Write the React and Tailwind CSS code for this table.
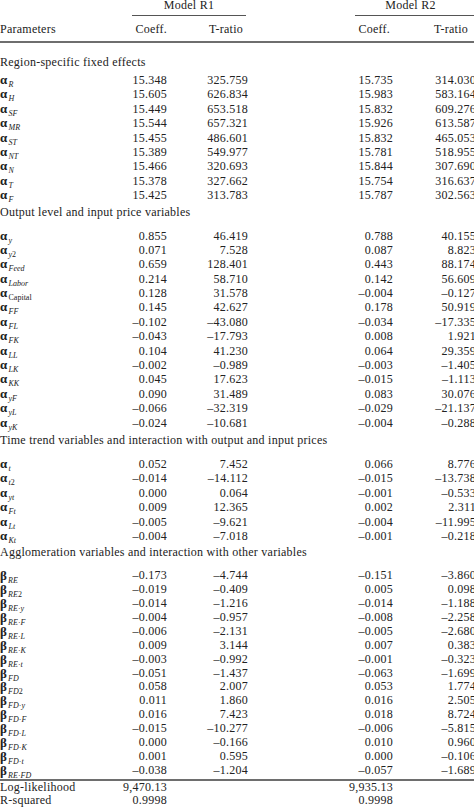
const COLS = 'grid grid-cols-[120px_47px_81px_97px_48px_83px]'

const sections = [
  {
    title: 'Region-specific fixed effects',
    g: 'α',
    head: 'mt-[12px] mb-[4px] h-[14px] leading-[14px]',
    row: 'h-[14.4px] leading-[14.4px]',
    rows: [
      ['R', '15.348', '325.759', '15.735', '314.030'],
      ['H', '15.605', '626.834', '15.983', '583.164'],
      ['SF', '15.449', '653.518', '15.832', '609.276'],
      ['MR', '15.544', '657.321', '15.926', '613.587'],
      ['ST', '15.455', '486.601', '15.832', '465.053'],
      ['NT', '15.389', '549.977', '15.781', '518.955'],
      ['N', '15.466', '320.693', '15.844', '307.690'],
      ['T', '15.378', '327.662', '15.754', '316.637'],
      ['F', '15.425', '313.783', '15.787', '302.563'],
    ],
  },
  {
    title: 'Output level and input price variables',
    g: 'α',
    head: 'mt-[2px] mb-[10px] h-[14px] leading-[14px]',
    row: 'h-[14.4px] leading-[14.4px]',
    rows: [
      ['y', '0.855', '46.419', '0.788', '40.155'],
      ['y2', '0.071', '7.528', '0.087', '8.823'],
      ['Feed', '0.659', '128.401', '0.443', '88.174'],
      ['Labor', '0.214', '58.710', '0.142', '56.609'],
      ['Capital', '0.128', '31.578', '–0.004', '–0.127'],
      ['FF', '0.145', '42.627', '0.178', '50.919'],
      ['FL', '–0.102', '–43.080', '–0.034', '–17.335'],
      ['FK', '–0.043', '–17.793', '0.008', '1.921'],
      ['LL', '0.104', '41.230', '0.064', '29.359'],
      ['LK', '–0.002', '–0.989', '–0.003', '–1.405'],
      ['KK', '0.045', '17.623', '–0.015', '–1.113'],
      ['yF', '0.090', '31.489', '0.083', '30.076'],
      ['yL', '–0.066', '–32.319', '–0.029', '–21.137'],
      ['yK', '–0.024', '–10.681', '–0.004', '–0.288'],
    ],
  },
  {
    title: 'Time trend variables and interaction with output and input prices',
    g: 'α',
    head: 'mt-[3px] mb-[10px] h-[14px] leading-[14px]',
    row: 'h-[14.4px] leading-[14.4px]',
    rows: [
      ['t', '0.052', '7.452', '0.066', '8.776'],
      ['t2', '–0.014', '–14.112', '–0.015', '–13.738'],
      ['yt', '0.000', '0.064', '–0.001', '–0.533'],
      ['Ft', '0.009', '12.365', '0.002', '2.311'],
      ['Lt', '–0.005', '–9.621', '–0.004', '–11.995'],
      ['Kt', '–0.004', '–7.018', '–0.001', '–0.218'],
    ],
  },
  {
    title: 'Agglomeration variables and interaction with other variables',
    g: 'β',
    head: 'mt-[2px] mb-[10px] h-[14px] leading-[14px]',
    row: 'h-[13.9px] leading-[13.9px]',
    rows: [
      ['RE', '–0.173', '–4.744', '–0.151', '–3.860'],
      ['RE2', '–0.019', '–0.409', '0.005', '0.098'],
      ['RE·y', '–0.014', '–1.216', '–0.014', '–1.188'],
      ['RE·F', '–0.004', '–0.957', '–0.008', '–2.258'],
      ['RE·L', '–0.006', '–2.131', '–0.005', '–2.680'],
      ['RE·K', '0.009', '3.144', '0.007', '0.383'],
      ['RE·t', '–0.003', '–0.992', '–0.001', '–0.323'],
      ['FD', '–0.051', '–1.437', '–0.063', '–1.699'],
      ['FD2', '0.058', '2.007', '0.053', '1.774'],
      ['FD·y', '0.011', '1.860', '0.016', '2.505'],
      ['FD·F', '0.016', '7.423', '0.018', '8.724'],
      ['FD·L', '–0.015', '–10.277', '–0.006', '–5.815'],
      ['FD·K', '0.000', '–0.166', '0.010', '0.960'],
      ['FD·t', '0.001', '0.595', '0.000', '–0.106'],
      ['RE·FD', '–0.038', '–1.204', '–0.057', '–1.689'],
    ],
  },
]

function Sub({ text }) {
  // digits and "Capital" are set upright, the rest in italics
  if (text === 'Capital') return <span className="not-italic">{text}</span>
  return text.split('').map((ch, i) =>
    /[0-9·]/.test(ch) ? (
      <span key={i} className="not-italic">{ch}</span>
    ) : (
      <span key={i}>{ch}</span>
    )
  )
}

function Sym({ g, sub }) {
  return (
    <span className="whitespace-nowrap">
      <span className="font-bold text-[13px]">{g}</span>
      <span className="italic text-[8px] leading-none align-[-3px] ml-[1px] tracking-normal">
        <Sub text={sub} />
      </span>
    </span>
  )
}

function Row({ g, r, h }) {
  return (
    <div className={`${COLS} ${h}`}>
      <div>
        <Sym g={g} sub={r[0]} />
      </div>
      <div className="text-right">{r[1]}</div>
      <div className="text-right">{r[2]}</div>
      <div />
      <div className="text-right">{r[3]}</div>
      <div className="text-right">{r[4]}</div>
    </div>
  )
}

export default function App() {
  return (
    <div className="w-[474px] h-[808px] overflow-hidden bg-white text-[#222] font-['Liberation_Serif',serif] text-[12px] tracking-[0.25px]">
      <div className="w-[478px]">
        {/* column group header */}
        <div className={COLS}>
          <div />
          <div className="col-span-2 pl-[12px] pr-[2px]">
            <div className="h-[10px] leading-[10px] text-center">Model R1</div>
            <div className="mt-[5px] h-px bg-[#555]" />
          </div>
          <div />
          <div className="col-span-2 pl-[10px]">
            <div className="h-[10px] leading-[10px] text-center pr-[10px]">Model R2</div>
            <div className="mt-[5px] h-px bg-[#555]" />
          </div>
        </div>

        <div className={`${COLS} mt-[6px] h-[14px] leading-[14px]`}>
          <div>Parameters</div>
          <div className="text-right">Coeff.</div>
          <div className="text-right pr-[5px]">T-ratio</div>
          <div />
          <div className="text-right pr-[3px]">Coeff.</div>
          <div className="text-right pr-[8px]">T-ratio</div>
        </div>
        <div className="mt-[5px] h-[2px] bg-[#6e6e6e]" />

        {sections.map((s) => (
          <div key={s.title}>
            <div className={s.head}>{s.title}</div>
            {s.rows.map((r) => (
              <Row key={r[0]} g={s.g} r={r} h={s.row} />
            ))}
          </div>
        ))}

        <div className="mt-[1px] h-[2px] bg-[#6e6e6e]" />
        <div className={`${COLS} h-[12px] leading-[12px]`}>
          <div>Log-likelihood</div>
          <div className="text-right">9,470.13</div>
          <div />
          <div />
          <div className="text-right">9,935.13</div>
          <div />
        </div>
        <div className={`${COLS} h-[14px] leading-[14px]`}>
          <div>R-squared</div>
          <div className="text-right">0.9998</div>
          <div />
          <div />
          <div className="text-right">0.9998</div>
          <div />
        </div>
      </div>
    </div>
  )
}
